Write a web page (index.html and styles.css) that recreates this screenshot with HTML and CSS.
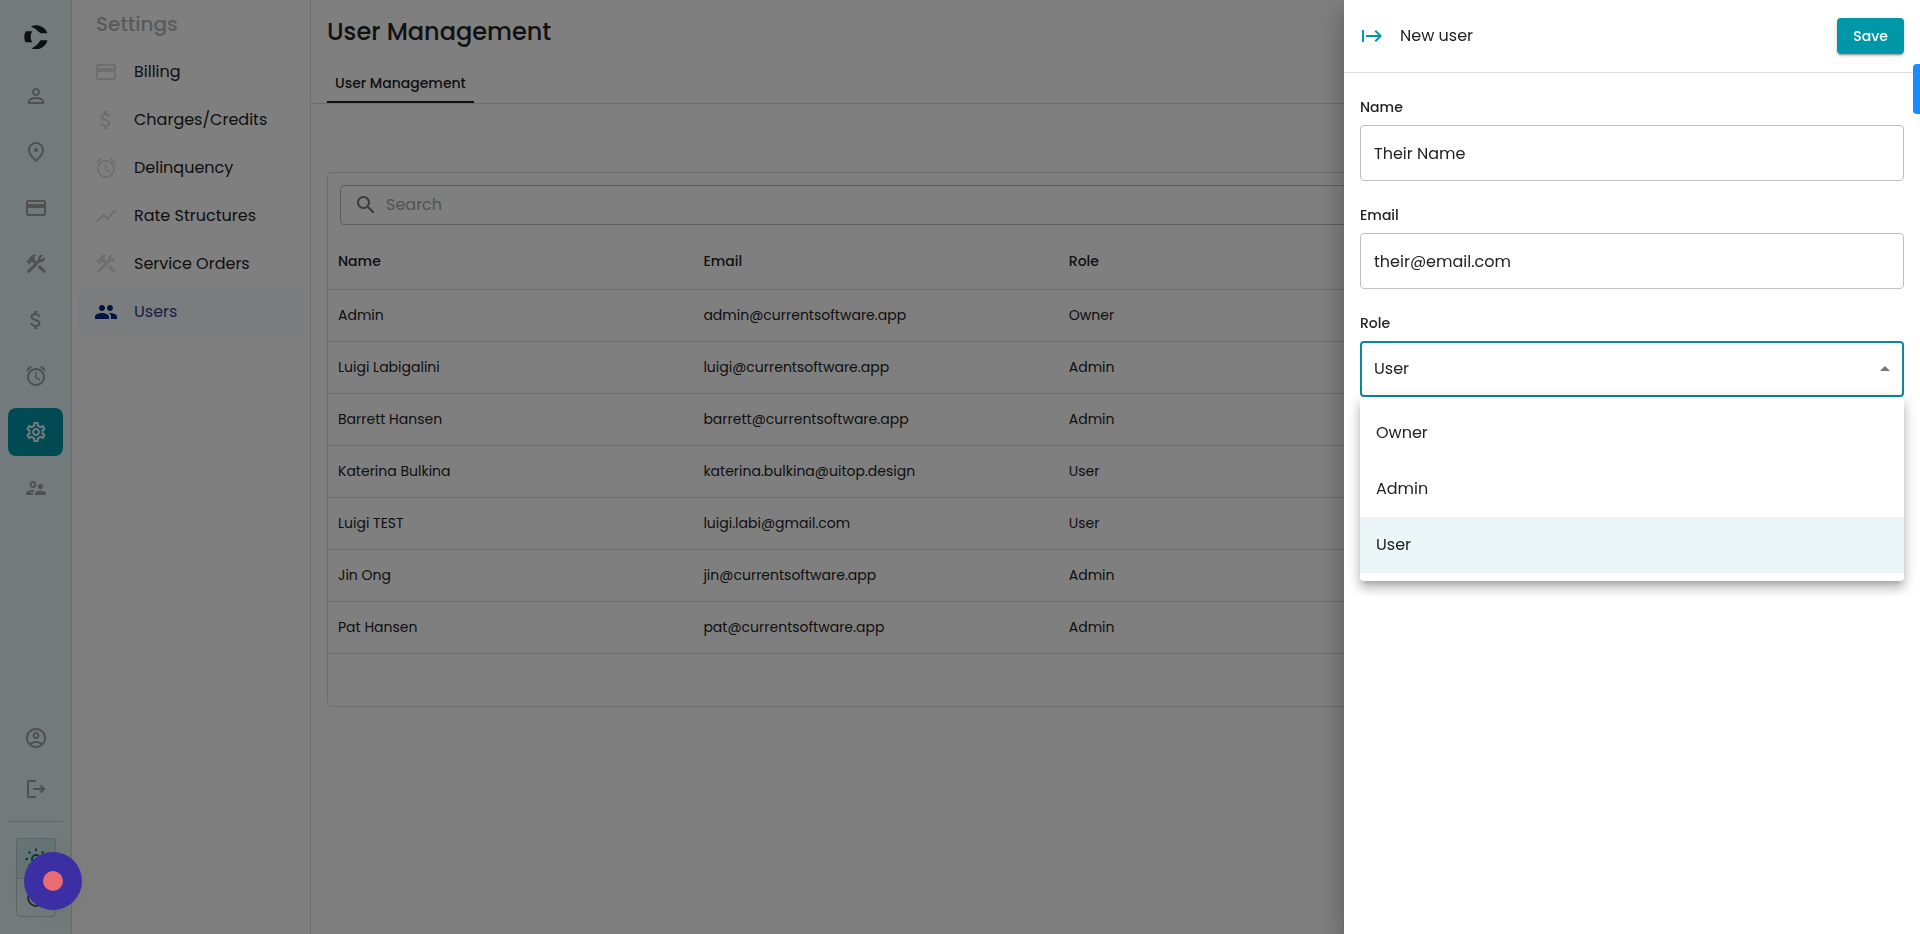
FILE: index.html
```
<!DOCTYPE html>
<html lang="en">
<head>
  <meta charset="UTF-8">
  <meta name="viewport" content="width=device-width, initial-scale=1">
  <title>User Management</title>
  <link rel="stylesheet" href="styles.css">
</head>
<body>

  <!-- Shared icons -->
  <svg class="sprite" aria-hidden="true">
    <symbol id="i-card" viewBox="0 0 24 24"><path d="M20 4H4c-1.11 0-1.99.89-1.99 2L2 18c0 1.11.89 2 2 2h16c1.11 0 2-.89 2-2V6c0-1.11-.89-2-2-2zm0 14H4v-6h16v6zm0-10H4V6h16v2z"/></symbol>
    <symbol id="i-money" viewBox="0 0 24 24"><path d="M11.8 10.9c-2.27-.59-3-1.2-3-2.15 0-1.09 1.01-1.85 2.7-1.85 1.78 0 2.44.85 2.5 2.1h2.21c-.07-1.72-1.12-3.3-3.21-3.81V3h-3v2.16c-1.94.42-3.5 1.68-3.5 3.61 0 2.31 1.91 3.46 4.7 4.13 2.5.6 3 1.48 3 2.41 0 .69-.49 1.79-2.7 1.79-2.06 0-2.87-.92-2.98-2.1h-2.2c.12 2.19 1.76 3.42 3.68 3.83V21h3v-2.15c1.95-.37 3.5-1.5 3.5-3.55 0-2.84-2.43-3.81-4.7-4.4z"/></symbol>
    <symbol id="i-alarm" viewBox="0 0 24 24"><path d="M22 5.72l-4.6-3.86-1.29 1.53 4.6 3.86L22 5.72zM7.88 3.39L6.6 1.86 2 5.71l1.29 1.53 4.59-3.85zM12.5 8H11v6l4.75 2.85.75-1.23-4-2.37V8zM12 4c-4.97 0-9 4.03-9 9s4.02 9 9 9c4.97 0 9-4.03 9-9s-4.03-9-9-9zm0 16c-3.87 0-7-3.13-7-7s3.13-7 7-7 7 3.13 7 7-3.13 7-7 7z"/></symbol>
    <symbol id="i-tools" viewBox="0 0 24 24"><path d="M13.783 15.172l2.121-2.121 5.996 5.996-2.121 2.121z"/><path d="M17.5 10c1.93 0 3.5-1.57 3.5-3.5 0-.58-.16-1.12-.41-1.6l-2.7 2.7-1.49-1.49 2.7-2.7c-.48-.25-1.02-.41-1.6-.41C15.57 3 14 4.57 14 6.5c0 .41.08.8.21 1.16l-1.85 1.85-1.78-1.78.71-.71-1.41-1.41L12 3.49c-1.17-1.17-3.07-1.17-4.24 0L4.22 7.03l1.41 1.41H2.81l-.71.71 3.54 3.54.71-.71V9.15l1.41 1.41.71-.71 1.78 1.78-7.41 7.41 2.12 2.12L16.34 9.79c.36.13.75.21 1.16.21z"/></symbol>
  </svg>

  <div class="app">
    <nav class="rail" aria-label="Main">
      <a class="logo" href="#" aria-label="Home">
        <svg viewBox="0 0 24 24"><path d="M7 1.5A12 12 0 0 1 23.5 8.3h-7Q13 4 7 1.500z"/><path d="M23.500 15.300A12 12 0 0 1 7.500 23.500q6-3 9-8.200z"/><path d="M1.800 6.300h6.500q-3.300 5.200 0 11H1.500a12 12 0 0 1 .3-11z"/></svg>
      </a>
      <a class="rail-item" href="#" aria-label="Customers"><svg class="icon" viewBox="0 0 24 24"><path d="M12 5.9c1.16 0 2.1.94 2.1 2.1s-.94 2.1-2.1 2.1S9.9 9.16 9.9 8s.94-2.1 2.1-2.1m0 9c2.97 0 6.1 1.46 6.1 2.1v1.1H5.9V17c0-.64 3.13-2.1 6.1-2.1M12 4C9.79 4 8 5.79 8 8s1.79 4 4 4 4-1.79 4-4-1.79-4-4-4zm0 9c-2.67 0-8 1.34-8 4v3h16v-3c0-2.66-5.33-4-8-4z"/></svg></a>
      <a class="rail-item" href="#" aria-label="Locations"><svg class="icon" viewBox="0 0 24 24"><path d="M12 12c-1.1 0-2-.9-2-2s.9-2 2-2 2 .9 2 2-.9 2-2 2zm6-1.8C18 6.57 15.35 4 12 4s-6 2.57-6 6.2c0 2.34 1.95 5.44 6 9.14 4.05-3.7 6-6.8 6-9.14zM12 2c4.2 0 8 3.22 8 8.2 0 3.32-2.67 7.25-8 11.8-5.33-4.55-8-8.48-8-11.8C4 5.22 7.8 2 12 2z"/></svg></a>
      <a class="rail-item" href="#" aria-label="Billing"><svg class="icon"><use href="#i-card"/></svg></a>
      <a class="rail-item" href="#" aria-label="Service orders"><svg class="icon"><use href="#i-tools"/></svg></a>
      <a class="rail-item" href="#" aria-label="Charges"><svg class="icon"><use href="#i-money"/></svg></a>
      <a class="rail-item" href="#" aria-label="Delinquency"><svg class="icon"><use href="#i-alarm"/></svg></a>
      <a class="rail-item active" href="#" aria-label="Settings"><svg class="icon" viewBox="0 0 24 24"><path d="M19.43 12.98c.04-.32.07-.64.07-.98 0-.34-.03-.66-.07-.98l2.11-1.65c.19-.15.24-.42.12-.64l-2-3.46c-.09-.16-.26-.25-.44-.25-.06 0-.12.01-.17.03l-2.49 1c-.52-.4-1.08-.73-1.69-.98l-.38-2.65C14.46 2.18 14.25 2 14 2h-4c-.25 0-.46.18-.49.42l-.38 2.65c-.61.25-1.17.59-1.69.98l-2.49-1c-.06-.02-.12-.03-.18-.03-.17 0-.34.09-.43.25l-2 3.46c-.13.22-.07.49.12.64l2.11 1.65c-.04.32-.07.65-.07.98 0 .33.03.66.07.98l-2.11 1.65c-.19.15-.24.42-.12.64l2 3.46c.09.16.26.25.44.25.06 0 .12-.01.17-.03l2.49-1c.52.4 1.08.73 1.69.98l.38 2.65c.03.24.24.42.49.42h4c.25 0 .46-.18.49-.42l.38-2.65c.61-.25 1.17-.59 1.69-.98l2.49 1c.06.02.12.03.18.03.17 0 .34-.09.43-.25l2-3.46c.12-.22.07-.49-.12-.64l-2.11-1.65zm-1.98-1.71c.04.31.05.52.05.73 0 .21-.02.43-.05.73l-.14 1.13.89.7 1.08.84-.7 1.21-1.27-.51-1.04-.42-.9.68c-.43.32-.84.56-1.25.73l-1.06.43-.16 1.13-.2 1.35h-1.4l-.19-1.35-.16-1.13-1.06-.43c-.43-.18-.83-.41-1.23-.71l-.91-.7-1.06.43-1.27.51-.7-1.21 1.08-.84.89-.7-.14-1.13c-.03-.31-.05-.54-.05-.74s.02-.43.05-.73l.14-1.13-.89-.7-1.08-.84.7-1.21 1.27.51 1.04.42.9-.68c.43-.32.84-.56 1.25-.73l1.06-.43.16-1.13.2-1.35h1.39l.19 1.35.16 1.13 1.06.43c.43.18.83.41 1.23.71l.91.7 1.06-.43 1.27-.51.7 1.21-1.07.85-.89.7.14 1.13zM12 8c-2.21 0-4 1.79-4 4s1.79 4 4 4 4-1.79 4-4-1.79-4-4-4zm0 6c-1.1 0-2-.9-2-2s.9-2 2-2 2 .9 2 2-.9 2-2 2z"/></svg></a>
      <a class="rail-item" href="#" aria-label="Team"><svg class="icon" viewBox="0 0 24 24"><path d="M9 12c1.93 0 3.5-1.57 3.5-3.5S10.93 5 9 5 5.5 6.57 5.5 8.5 7.07 12 9 12zm0-5c.83 0 1.5.67 1.5 1.5S9.83 10 9 10s-1.5-.67-1.5-1.5S8.17 7 9 7zm.05 10H4.77c.99-.5 2.7-1 4.23-1 .11 0 .23.01.34.01.34-.73.93-1.33 1.64-1.81-.73-.13-1.42-.2-1.98-.2-2.34 0-7 1.17-7 3.5V19h7v-1.5c0-.17.02-.34.05-.5zm7.45-2.5c-1.84 0-5.5 1.01-5.5 3V19h11v-1.5c0-1.99-3.66-3-5.5-3zm1.21-1.82c.76-.43 1.29-1.24 1.29-2.18C19 9.12 17.88 8 16.5 8S14 9.12 14 10.5c0 .94.53 1.75 1.29 2.18.36.2.77.32 1.21.32s.85-.12 1.21-.32z"/></svg></a>

      <div class="rail-bottom">
        <a class="rail-item" href="#" aria-label="Account"><svg class="icon" viewBox="0 0 24 24"><path d="M12 2C6.48 2 2 6.48 2 12s4.48 10 10 10 10-4.48 10-10S17.52 2 12 2zM7.35 18.5C8.66 17.56 10.26 17 12 17s3.34.56 4.65 1.5c-1.31.94-2.91 1.5-4.65 1.5s-3.34-.56-4.65-1.5zm10.79-1.38C16.45 15.8 14.32 15 12 15s-4.45.8-6.14 2.12C4.7 15.73 4 13.95 4 12c0-4.42 3.58-8 8-8s8 3.58 8 8c0 1.95-.7 3.73-1.86 5.12zM12 6c-1.93 0-3.5 1.57-3.5 3.5S10.07 13 12 13s3.5-1.57 3.5-3.5S13.93 6 12 6zm0 5c-.83 0-1.5-.67-1.5-1.5S11.17 8 12 8s1.5.67 1.5 1.5S12.83 11 12 11z"/></svg></a>
        <a class="rail-item" href="#" aria-label="Log out"><svg class="icon line" viewBox="0 0 24 24"><path d="M12 4H5q-1 0-1 1v14q0 1 1 1h7M9 12h11M16.5 8.5 20 12l-3.5 3.5"/></svg></a>
        <div class="theme-toggle">
          <button type="button" class="theme-button selected" aria-label="Light mode"><svg class="icon line" viewBox="0 0 24 24"><circle cx="12" cy="12" r="4"/><path d="M12 1.500v2.500M12 20v2.500M1.500 12H4M20 12h2.500M4.600 4.600l1.700 1.700M17.700 17.700l1.700 1.700M4.600 19.400l1.700-1.700M17.700 6.300l1.700-1.700"/></svg></button>
          <button type="button" class="theme-button" aria-label="Dark mode"><svg class="icon line" viewBox="0 0 24 24"><path d="M11 4a8 8 0 1 0 9 9.500A6 6 0 0 1 11 4z"/></svg></button>
        </div>
      </div>
    </nav>

    <nav class="settings" aria-label="Settings">
      <h2 class="settings-title">Settings</h2>
      <a class="settings-item" href="#"><svg class="icon"><use href="#i-card"/></svg>Billing</a>
      <a class="settings-item" href="#"><svg class="icon"><use href="#i-money"/></svg>Charges/Credits</a>
      <a class="settings-item" href="#"><svg class="icon"><use href="#i-alarm"/></svg>Delinquency</a>
      <a class="settings-item" href="#"><svg class="icon" viewBox="0 0 24 24"><path d="M3.5 18.49l6-6.01 4 4L22 6.92l-1.41-1.41-7.09 7.97-4-4L2 16.99z"/></svg>Rate Structures</a>
      <a class="settings-item" href="#"><svg class="icon"><use href="#i-tools"/></svg>Service Orders</a>
      <a class="settings-item active" href="#"><svg class="icon" viewBox="0 0 24 24"><path d="M16 11c1.66 0 2.99-1.34 2.99-3S17.66 5 16 5c-1.66 0-3 1.34-3 3s1.34 3 3 3zm-8 0c1.66 0 2.99-1.34 2.99-3S9.66 5 8 5C6.34 5 5 6.34 5 8s1.34 3 3 3zm0 2c-2.33 0-7 1.17-7 3.5V19h14v-2.5c0-2.33-4.67-3.5-7-3.5zm8 0c-.29 0-.62.02-.97.05 1.16.84 1.97 1.97 1.97 3.45V19h6v-2.5c0-2.33-4.67-3.5-7-3.5z"/></svg>Users</a>
    </nav>

    <main class="main">
      <h1 class="page-title">User Management</h1>
      <div class="tabs">
        <button type="button" class="tab">User Management</button>
      </div>

      <section class="card">
        <label class="search">
          <svg class="icon" viewBox="0 0 24 24"><path d="M15.5 14h-.79l-.28-.27C15.41 12.59 16 11.11 16 9.5 16 5.91 13.09 3 9.5 3S3 5.91 3 9.5 5.91 16 9.5 16c1.61 0 3.09-.59 4.23-1.57l.27.28v.79l5 4.99L20.49 19l-4.99-5zm-6 0C7.01 14 5 11.99 5 9.5S7.01 5 9.5 5 14 7.01 14 9.5 11.99 14 9.5 14z"/></svg>
          <input type="text" placeholder="Search" aria-label="Search">
        </label>
        <table class="users">
          <thead>
            <tr><th>Name</th><th>Email</th><th>Role</th><td></td></tr>
          </thead>
          <tbody>
            <tr><td>Admin</td><td>admin@currentsoftware.app</td><td>Owner</td><td></td></tr>
            <tr><td>Luigi Labigalini</td><td>luigi@currentsoftware.app</td><td>Admin</td><td></td></tr>
            <tr><td>Barrett Hansen</td><td>barrett@currentsoftware.app</td><td>Admin</td><td></td></tr>
            <tr><td>Katerina Bulkina</td><td>katerina.bulkina@uitop.design</td><td>User</td><td></td></tr>
            <tr><td>Luigi TEST</td><td>luigi.labi@gmail.com</td><td>User</td><td></td></tr>
            <tr><td>Jin Ong</td><td>jin@currentsoftware.app</td><td>Admin</td><td></td></tr>
            <tr><td>Pat Hansen</td><td>pat@currentsoftware.app</td><td>Admin</td><td></td></tr>
          </tbody>
        </table>
        <div class="card-footer"></div>
      </section>
    </main>
  </div>

  <div class="backdrop"></div>

  <form class="drawer">
    <header class="drawer-header">
      <button type="button" class="drawer-close" aria-label="Close"><svg class="icon" viewBox="0 0 24 24"><path d="M14.59 7.41 18.17 11H6v2h12.17l-3.59 3.59L16 18l6-6-6-6-1.41 1.41zM2 6v12h2V6H2z"/></svg></button>
      <h2 class="drawer-title">New user</h2>
      <button type="submit" class="save-button">Save</button>
    </header>

    <div class="drawer-body">
      <div class="field">
        <label for="name">Name</label>
        <input type="text" id="name" class="control" value="Their Name">
      </div>
      <div class="field">
        <label for="email">Email</label>
        <input type="text" id="email" class="control" value="their@email.com">
      </div>
      <div class="field">
        <label for="role">Role</label>
        <div class="select-wrapper">
          <select id="role" class="control open">
            <option>Owner</option>
            <option>Admin</option>
            <option selected>User</option>
          </select>
          <svg class="icon select-arrow" viewBox="0 0 24 24"><path d="M7 14l5-5 5 5z"/></svg>
          <ul class="menu" role="listbox" aria-label="Role">
            <li class="menu-item" role="option">Owner</li>
            <li class="menu-item" role="option">Admin</li>
            <li class="menu-item selected" role="option" aria-selected="true">User</li>
          </ul>
        </div>
      </div>
    </div>
  </form>

  <button type="button" class="side-tab" aria-label="Feedback"></button>
  <button type="button" class="record-button" aria-label="Record"></button>

</body>
</html>
```

FILE: styles.css
```
* {
  box-sizing: border-box;
}

body {
  margin: 0;
  font-family: Poppins, Inter, sans-serif;
  font-size: 16px;
  line-height: 24px;
  color: #222;
  background: #fff;
}

a {
  color: inherit;
  text-decoration: none;
}

button, input, select {
  font: inherit;
  color: inherit;
}

button {
  cursor: pointer;
}

.sprite {
  display: none;
}

.icon {
  flex: none;
  width: 24px;
  height: 24px;
  fill: currentColor;
}

.icon.line {
  fill: none;
  stroke: currentColor;
  stroke-width: 2;
}

.app {
  display: flex;
  min-height: 100vh;
}

/* Icon rail */
.rail {
  display: flex;
  flex-direction: column;
  gap: 8px;
  width: 72px;
  padding: 0 8px 17px;
  background: #e5f5f8;
  border-right: 1px solid #cfdcde;
  color: #a0a0a0;
}

.logo {
  display: flex;
  justify-content: center;
  align-items: center;
  height: 64px;
  padding-top: 10px;
}

.logo svg {
  width: 24px;
  height: 24px;
  fill: #1c1f24;
}

.rail-item {
  display: flex;
  justify-content: center;
  align-items: center;
  height: 48px;
  border-radius: 8px;
}

.rail-item.active {
  background: #0097a7;
  color: #e5f5f8;
}

.rail-bottom {
  display: flex;
  flex-direction: column;
  gap: 3px;
  margin-top: auto;
}

.theme-toggle {
  display: flex;
  flex-direction: column;
  align-items: center;
  margin-top: 5px;
  padding-top: 16px;
  border-top: 1px solid #b9d0d4;
}

.theme-button {
  display: flex;
  justify-content: center;
  align-items: center;
  width: 40px;
  height: 39px;
  padding: 0;
  border: 1px solid #b4cdd1;
  border-radius: 0 0 4px 4px;
  background: none;
  color: #555;
}

.theme-button.selected {
  height: 40px;
  border-bottom: 0;
  border-radius: 4px 4px 0 0;
  background: #d0eaed;
  color: #007581;
}

/* Settings menu */
.settings {
  display: flex;
  flex-direction: column;
  width: 239px;
  padding: 0 6px;
  border-right: 1px solid #dcdcdc;
}

.settings-title {
  margin: 0;
  padding: 12px 18px;
  font-size: 20px;
  font-weight: 500;
  line-height: 24px;
  color: #b4b4b4;
}

.settings-item {
  display: flex;
  align-items: center;
  gap: 16px;
  height: 48px;
  padding: 0 16px;
  border-radius: 8px;
}

.settings-item .icon {
  color: #dcdcdc;
}

.settings-item.active {
  background: #f6f8fd;
  color: #2a458c;
}

.settings-item.active .icon {
  color: #002884;
}

/* Main content */
.main {
  flex: 1;
  min-width: 0;
}

.page-title {
  margin: 0;
  padding: 16px;
  font-size: 24px;
  font-weight: 500;
  line-height: 32px;
}

.tabs {
  display: flex;
  padding: 0 16px;
  border-bottom: 1px solid #dcdcdc;
}

.tab {
  height: 39px;
  padding: 0 8px;
  border: 0;
  border-bottom: 2px solid #222;
  background: none;
  font-size: 14px;
  font-weight: 500;
  line-height: 20px;
}

.card {
  margin: 68px 16px 0;
  border: 1px solid #dcdcdc;
  border-radius: 4px;
}

.search {
  display: flex;
  align-items: center;
  gap: 8px;
  height: 40px;
  margin: 12px 12px 8px;
  padding: 0 13px;
  border: 1px solid #bdbdbd;
  border-radius: 4px;
  color: #777;
}

.search input {
  flex: 1;
  min-width: 0;
  padding: 0;
  border: 0;
  outline: 0;
  background: none;
}

.search input::placeholder {
  color: #a4a4a4;
}

.users {
  width: 100%;
  table-layout: fixed;
  border-collapse: collapse;
  font-size: 14px;
  line-height: 20px;
}

.users th,
.users td {
  width: 23.2%;
  height: 52px;
  padding: 0 10px;
  border-bottom: 1px solid #dcdcdc;
  text-align: left;
}

.users th:nth-child(4),
.users td:nth-child(4) {
  width: auto;
}

.users th {
  height: 56px;
  font-weight: 500;
}

.card-footer {
  height: 52px;
}

.backdrop {
  position: fixed;
  inset: 0;
  background: rgba(0, 0, 0, 0.5);
}

/* New user drawer */
.drawer {
  position: fixed;
  top: 0;
  right: 0;
  bottom: 0;
  width: 30%;
  background: #fff;
  box-shadow: 0 8px 10px -5px rgba(0, 0, 0, 0.2), 0 16px 24px 2px rgba(0, 0, 0, 0.14), 0 6px 30px 5px rgba(0, 0, 0, 0.12);
}

.drawer-header {
  display: flex;
  align-items: center;
  gap: 16px;
  height: 73px;
  padding: 0 16px;
  border-bottom: 1px solid #dcdcdc;
}

.drawer-close {
  display: flex;
  padding: 0;
  border: 0;
  background: none;
  color: #0097a7;
}

.drawer-title {
  flex: 1;
  margin: 0;
  font-size: 16px;
  font-weight: 400;
}

.save-button {
  height: 36px;
  padding: 0 16px;
  border: 0;
  border-radius: 4px;
  background: #0097a7;
  box-shadow: 0 3px 1px -2px rgba(0, 0, 0, 0.2), 0 2px 2px 0 rgba(0, 0, 0, 0.14), 0 1px 5px 0 rgba(0, 0, 0, 0.12);
  color: #fff;
  font-size: 14px;
  font-weight: 500;
}

.drawer-body {
  display: flex;
  flex-direction: column;
  gap: 24px;
  padding: 24px 16px;
}

.field {
  display: flex;
  flex-direction: column;
  gap: 8px;
}

.field label {
  font-size: 14px;
  font-weight: 500;
  line-height: 20px;
}

.control {
  width: 100%;
  height: 56px;
  padding: 0 13px;
  border: 1px solid #c0c0c0;
  border-radius: 4px;
  outline: 0;
  background: #fff;
}

select.control {
  display: block;
  appearance: none;
}

.control.open {
  padding: 0 12px;
  border: 2px solid #0a8a96;
}

.select-wrapper {
  position: relative;
}

.select-arrow {
  position: absolute;
  top: 16px;
  right: 7px;
  color: #757575;
  pointer-events: none;
}

.menu {
  position: absolute;
  top: 100%;
  left: 0;
  right: 0;
  margin: 0;
  padding: 8px 0;
  border-radius: 4px;
  background: #fff;
  box-shadow: 0 5px 5px -3px rgba(0, 0, 0, 0.2), 0 8px 10px 1px rgba(0, 0, 0, 0.14), 0 3px 14px 2px rgba(0, 0, 0, 0.12);
  list-style: none;
}

.menu-item {
  padding: 16px;
  cursor: pointer;
}

.menu-item.selected {
  background: #ebf6f8;
}

/* Floating widgets */
.side-tab {
  position: fixed;
  top: 64px;
  right: 0;
  width: 7px;
  height: 50px;
  padding: 0;
  border: 0;
  border-radius: 4px 0 0 4px;
  background: #1a8cff;
}

.record-button {
  position: fixed;
  left: 24px;
  bottom: 24px;
  display: flex;
  justify-content: center;
  align-items: center;
  width: 58px;
  height: 58px;
  padding: 0;
  border: 0;
  border-radius: 50%;
  background: #3b2fa3;
  box-shadow: 0 0 28px rgba(0, 0, 0, 0.06);
}

.record-button::before {
  content: "";
  width: 20px;
  height: 20px;
  border-radius: 50%;
  background: #eb6b75;
}
```
